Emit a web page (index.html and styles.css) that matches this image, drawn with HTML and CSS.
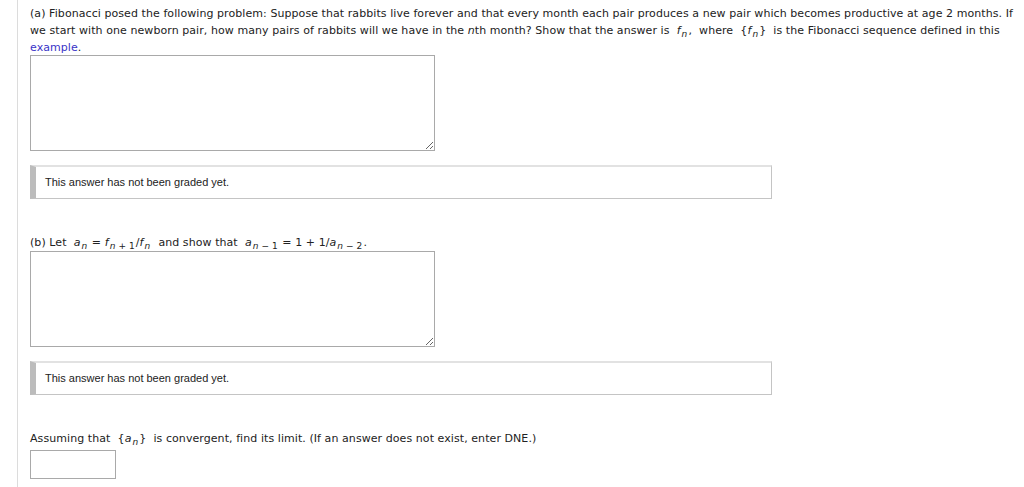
FILE: index.html
```html
<!DOCTYPE html>
<html>
<head>
<meta charset="utf-8">
<link rel="stylesheet" href="styles.css">
</head>
<body>
<div class="question">
  <p class="prompt">(a) Fibonacci posed the following problem: Suppose that rabbits live forever and that every month each pair produces a new pair which becomes productive at age 2 months. If we start with one newborn pair, how many pairs of rabbits will we have in the <i>n</i>th month? Show that the answer is &nbsp;<i>f<sub>n</sub></i>,&nbsp; where &nbsp;{<i>f<sub>n</sub></i>}&nbsp; is the Fibonacci sequence defined in this <a class="link" href="#">example</a>.</p>
  <textarea class="answer"></textarea>
  <div class="feedback">This answer has not been graded yet.</div>

  <p class="prompt part-b">(b) Let &nbsp;<i>a<sub>n</sub></i> = <i>f</i><sub><i>n</i> + 1</sub>/<i>f<sub>n</sub></i>&nbsp; and show that &nbsp;<i>a</i><sub><i>n</i> − 1</sub> = 1 + 1/<i>a</i><sub><i>n</i> − 2</sub>.</p>
  <textarea class="answer"></textarea>
  <div class="feedback">This answer has not been graded yet.</div>

  <p class="prompt part-c">Assuming that &nbsp;{<i>a<sub>n</sub></i>}&nbsp; is convergent, find its limit. (If an answer does not exist, enter DNE.)</p>
  <input class="short" type="text">
</div>
</body>
</html>
```

FILE: styles.css
```css
html, body {
  margin: 0;
  padding: 0;
  background: #ffffff;
}

.question {
  margin-left: 17px;
  border-left: 1px solid #dcdcdc;
  padding: 5px 0 20px 12px;
  width: 990px;
  min-height: 470px;
  font-family: "DejaVu Sans", Verdana, sans-serif;
  font-size: 11px;
  letter-spacing: 0.07px;
  color: #222222;
}

.prompt {
  margin: 0;
  line-height: 17px;
}

.prompt:first-child {
  margin-bottom: -1px;
}

.prompt i {
  font-style: italic;
}

.prompt sub {
  font-size: 9px;
  vertical-align: -3px;
  line-height: 0;
  padding: 0 1px;
}

.link {
  color: #3a34c8;
  text-decoration: none;
}

.answer {
  display: block;
  box-sizing: border-box;
  width: 405px;
  height: 96px;
  margin: 0;
  border: 1px solid #a9a9a9;
  background: #ffffff;
}

.feedback {
  box-sizing: border-box;
  width: 742px;
  height: 34px;
  margin-top: 14px;
  padding: 0 0 1px 9px;
  display: flex;
  align-items: center;
  border: 1px solid #c4c4c4;
  border-top: 2px solid #e2e2e2;
  border-left: 6px solid #bcbcbc;
  font-family: "Liberation Sans", Arial, sans-serif;
  font-size: 11px;
  letter-spacing: 0;
  color: #222222;
}

.part-b {
  margin-top: 35px;
}

.part-c {
  margin-top: 35px;
}

.short {
  display: block;
  box-sizing: border-box;
  width: 86px;
  height: 29px;
  margin: 3px 0 0 0;
  border: 1px solid #a9a9a9;
  padding: 0;
}
```
